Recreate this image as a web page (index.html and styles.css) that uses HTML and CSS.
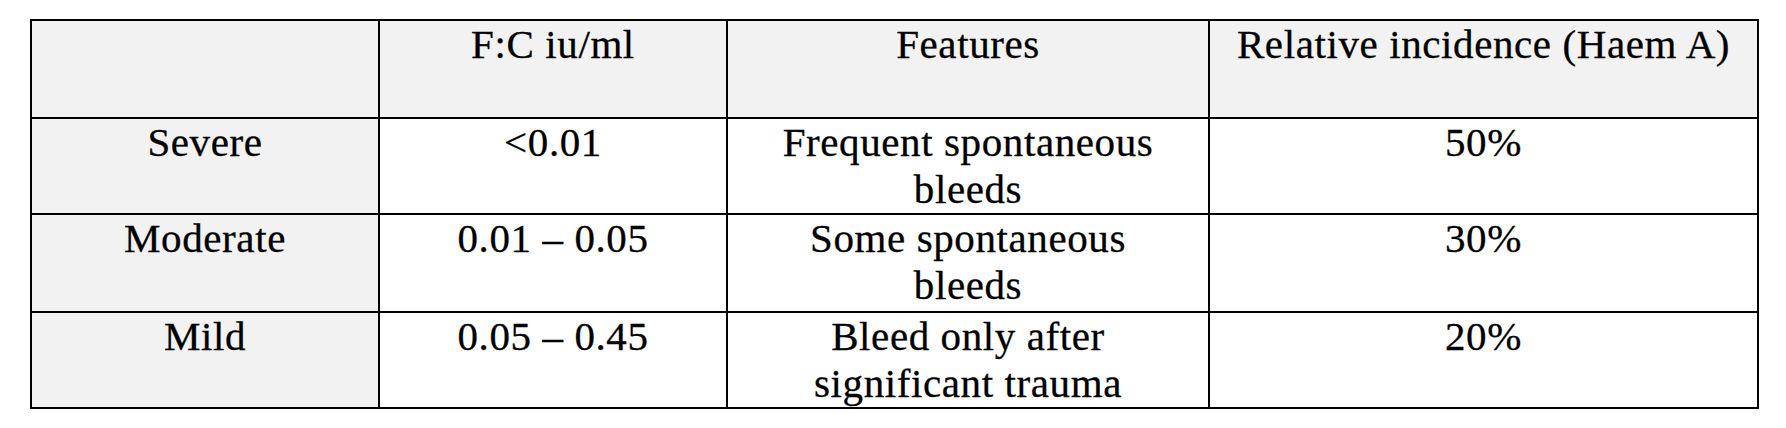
FILE: index.html
```html
<!DOCTYPE html>
<html>
<head>
<meta charset="utf-8">
<link rel="stylesheet" href="styles.css">
</head>
<body>
<div class="page">
  <div class="grid">
    <div class="cell shade"></div>
    <div class="cell shade">F:C iu/ml</div>
    <div class="cell shade">Features</div>
    <div class="cell shade">Relative incidence (Haem A)</div>

    <div class="cell shade">Severe</div>
    <div class="cell">&lt;0.01</div>
    <div class="cell">Frequent spontaneous<br>bleeds</div>
    <div class="cell">50%</div>

    <div class="cell shade">Moderate</div>
    <div class="cell">0.01 – 0.05</div>
    <div class="cell">Some spontaneous<br>bleeds</div>
    <div class="cell">30%</div>

    <div class="cell shade">Mild</div>
    <div class="cell">0.05 – 0.45</div>
    <div class="cell">Bleed only after<br>significant trauma</div>
    <div class="cell">20%</div>
  </div>
</div>
</body>
</html>
```
FILE: styles.css
```css
html, body {
  margin: 0;
  padding: 0;
  background: #ffffff;
}
.page {
  padding: 19px 0 0 30px;
}
.grid {
  display: grid;
  grid-template-columns: 346px 346px 480px 547px;
  grid-template-rows: 96px 94px 96px 94px;
  gap: 2px;
  padding: 2px;
  background: #000000;
  width: max-content;
}
.cell {
  background: #ffffff;
  color: #000000;
  font-family: "Liberation Serif", "Times New Roman", serif;
  font-size: 41px;
  line-height: 47px;
  letter-spacing: 0.6px;
  -webkit-text-stroke: 0.3px #000000;
  text-align: center;
  padding-top: 0;
  overflow: hidden;
}
.shade {
  background: #f2f2f2;
}
```
